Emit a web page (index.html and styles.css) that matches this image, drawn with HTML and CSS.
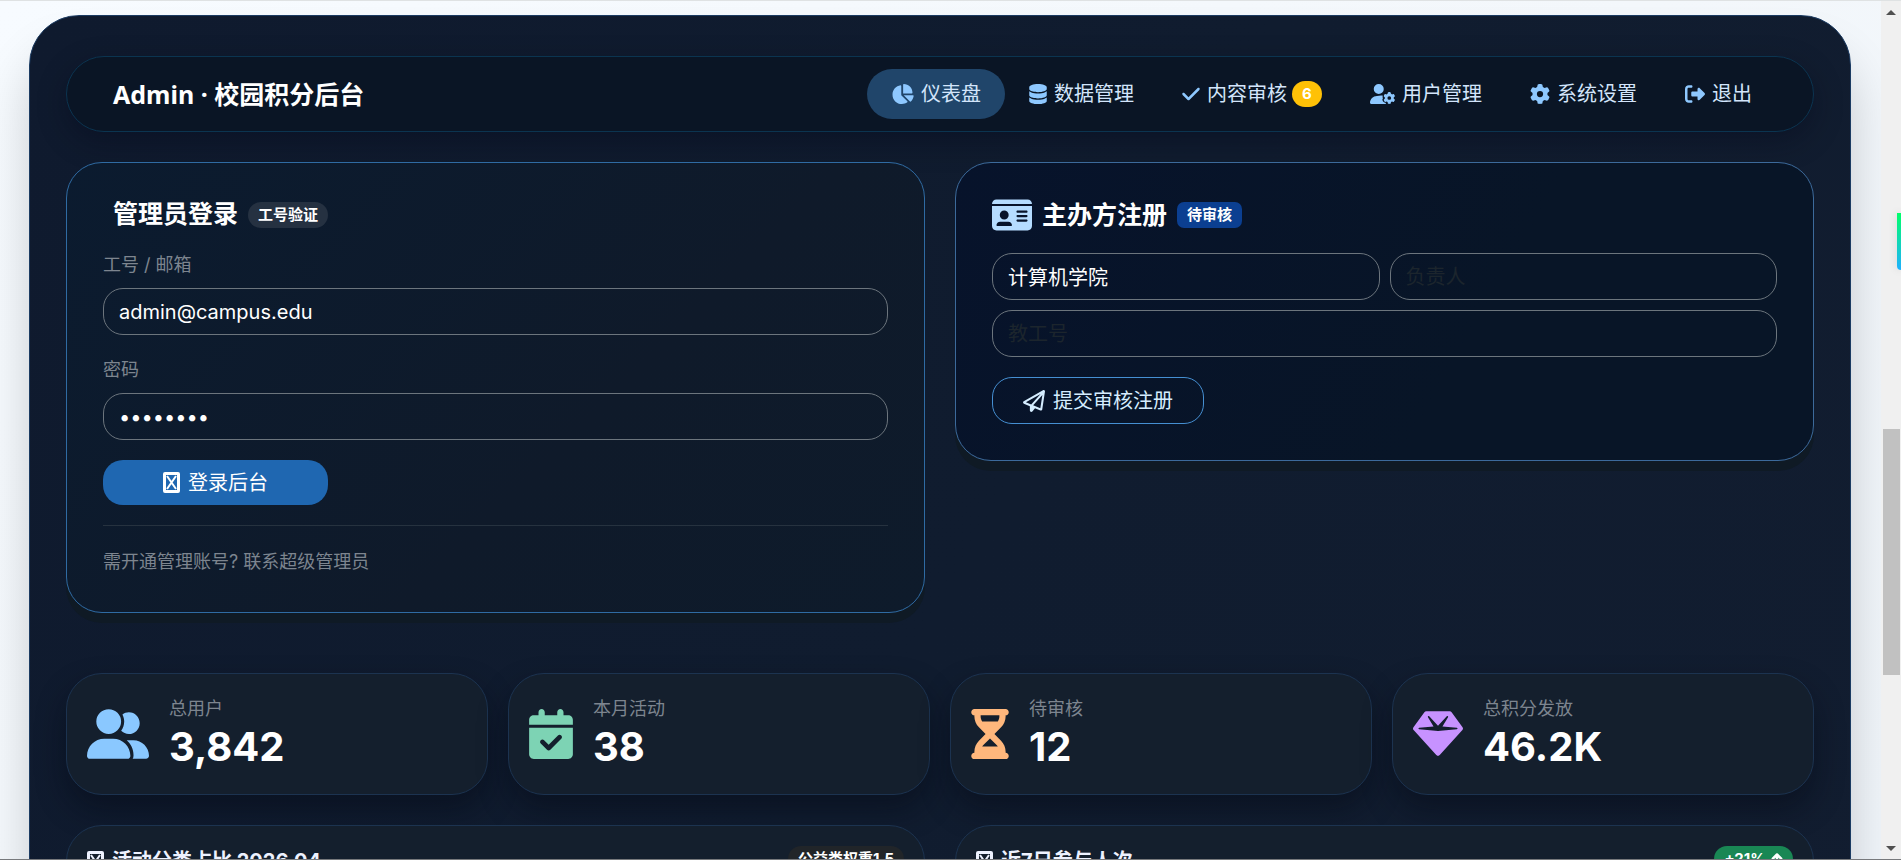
FILE: index.html
```html
<!DOCTYPE html>
<html lang="zh-CN">
<head>
<meta charset="utf-8">
<title>Admin · 校园积分后台</title>
<link rel="stylesheet" href="styles.css">
</head>
<body>
<svg class="sprite" aria-hidden="true">
  <symbol id="pie" viewBox="0 0 576 512"><path d="M304 240V16.6c0-9 7-16.6 16-16.6C443.7 0 544 100.3 544 224c0 9-7.6 16-16.6 16H304zM32 272C32 150.7 122.1 50.3 239 34.3c9.2-1.3 17 6.1 17 15.4V288L412.5 444.5c6.7 6.7 6.2 17.7-1.5 23.1C371.8 495.6 323.8 512 272 512C139.5 512 32 404.6 32 272zm526.4 16c9.3 0 16.6 7.8 15.4 17c-7.7 55.9-34.6 105.6-73.9 142.3c-6 5.6-15.4 5.2-21.2-.7L320 288H558.4z"/></symbol>
  <symbol id="database" viewBox="0 0 448 512"><path d="M448 80v48c0 44.2-100.3 80-224 80S0 172.2 0 128V80C0 35.8 100.3 0 224 0S448 35.8 448 80zM393.2 214.7c20.8-7.4 39.9-16.9 54.8-28.6V288c0 44.2-100.3 80-224 80S0 332.2 0 288V186.1c14.9 11.8 34 21.2 54.8 28.6C99.7 230.7 159.5 240 224 240s124.3-9.3 169.2-25.3zM0 346.1c14.9 11.8 34 21.2 54.8 28.6C99.7 390.7 159.5 400 224 400s124.3-9.3 169.2-25.3c20.8-7.4 39.9-16.9 54.8-28.6V432c0 44.2-100.3 80-224 80S0 476.2 0 432V346.1z"/></symbol>
  <symbol id="check" viewBox="0 0 448 512"><path d="M438.6 105.4c12.5 12.5 12.5 32.8 0 45.3l-256 256c-12.5 12.5-32.8 12.5-45.3 0l-128-128c-12.5-12.5-12.5-32.8 0-45.3s32.8-12.5 45.3 0L160 338.7 393.4 105.4c12.5-12.5 32.8-12.5 45.3 0z"/></symbol>
  <symbol id="gear" viewBox="0 0 512 512"><path d="M495.9 166.6c3.2 8.7 .5 18.4-6.4 24.6l-43.3 39.4c1.1 8.3 1.7 16.8 1.7 25.4s-.6 17.1-1.7 25.4l43.3 39.4c6.9 6.2 9.6 15.9 6.4 24.6c-4.4 11.9-9.7 23.3-15.8 34.3l-4.7 8.1c-6.6 11-14 21.4-22.1 31.2c-5.9 7.2-15.7 9.6-24.5 6.8l-55.7-17.7c-13.4 10.3-28.2 18.9-44 25.4l-12.5 57.1c-2 9.1-9 16.3-18.2 17.8c-13.8 2.3-28 3.5-42.5 3.5s-28.7-1.2-42.5-3.5c-9.2-1.5-16.2-8.7-18.2-17.8l-12.5-57.1c-15.8-6.5-30.6-15.1-44-25.4L83.1 425.9c-8.8 2.8-18.6 .3-24.5-6.8c-8.1-9.8-15.5-20.2-22.1-31.2l-4.7-8.1c-6.1-11-11.4-22.4-15.8-34.3c-3.2-8.7-.5-18.4 6.4-24.6l43.3-39.4C64.6 273.1 64 264.6 64 256s.6-17.1 1.7-25.4L22.4 191.2c-6.9-6.2-9.6-15.9-6.4-24.6c4.4-11.9 9.7-23.3 15.8-34.3l4.7-8.1c6.6-11 14-21.4 22.1-31.2c5.9-7.2 15.7-9.6 24.5-6.8l55.7 17.7c13.4-10.3 28.2-18.9 44-25.4l12.5-57.1c2-9.1 9-16.3 18.2-17.8C227.3 1.2 241.5 0 256 0s28.7 1.2 42.5 3.5c9.2 1.5 16.2 8.7 18.2 17.8l12.5 57.1c15.8 6.5 30.6 15.1 44 25.4l55.7-17.7c8.8-2.8 18.6-.3 24.5 6.8c8.1 9.8 15.5 20.2 22.1 31.2l4.7 8.1c6.1 11 11.4 22.4 15.8 34.3zM256 336a80 80 0 1 0 0-160 80 80 0 1 0 0 160z"/></symbol>
  <symbol id="user-gear" viewBox="0 0 640 512"><path d="M224 256A128 128 0 1 0 224 0a128 128 0 1 0 0 256zM178 304C80 304 0 384 0 482c0 17 13 30 30 30H414c-8-9-14-19-14-31l-2-4c-22 4-44-2-56-20c-10-14-20-30-24-48c-4-16 2-32 14-42l2-3c-10-12-16-26-12-42c2-7 5-14 8-20c-16-4-33-6-50-6z"/><svg x="342" y="206" width="304" height="304" viewBox="0 0 512 512"><use href="#gear"/></svg></symbol>
  <symbol id="exit" viewBox="0 0 512 512"><path d="M377.9 105.9L500.7 228.7c7.2 7.2 11.3 17.1 11.3 27.3s-4.1 20.1-11.3 27.3L377.9 406.1c-6.4 6.4-15 9.9-24 9.9c-18.7 0-33.9-15.2-33.9-33.9l0-62.1-128 0c-17.7 0-32-14.3-32-32l0-64c0-17.7 14.3-32 32-32l128 0 0-62.1c0-18.7 15.2-33.9 33.9-33.9c9 0 17.6 3.6 24 9.9zM160 96L96 96c-17.7 0-32 14.3-32 32l0 256c0 17.7 14.3 32 32 32l64 0c17.7 0 32 14.3 32 32s-14.3 32-32 32l-64 0c-53 0-96-43-96-96L0 128C0 75 43 32 96 32l64 0c17.7 0 32 14.3 32 32s-14.3 32-32 32z"/></symbol>
  <symbol id="id-card" viewBox="0 0 576 512"><path fill-rule="evenodd" d="M0 96l576 0c0-35.3-28.7-64-64-64H64C28.7 32 0 60.7 0 96zm0 32V416c0 35.3 28.7 64 64 64H512c35.3 0 64-28.7 64-64V128H0zM64 405.3c0-29.5 23.9-53.3 53.3-53.3H234.7c29.5 0 53.3 23.9 53.3 53.3c0 5.9-4.8 10.7-10.7 10.7H74.7c-5.9 0-10.7-4.8-10.7-10.7zM176 192a64 64 0 1 1 0 128 64 64 0 1 1 0-128zm176 16c0-8.8 7.2-16 16-16H496c8.8 0 16 7.2 16 16s-7.2 16-16 16H368c-8.8 0-16-7.2-16-16zm0 64c0-8.8 7.2-16 16-16H496c8.8 0 16 7.2 16 16s-7.2 16-16 16H368c-8.8 0-16-7.2-16-16zm0 64c0-8.8 7.2-16 16-16H496c8.8 0 16 7.2 16 16s-7.2 16-16 16H368c-8.8 0-16-7.2-16-16z"/></symbol>
  <symbol id="plane" viewBox="0 0 512 512"><path d="M16.1 260.2c-22.6 12.9-20.5 47.3 3.6 57.3L160 376V479.3c0 18.1 14.6 32.7 32.7 32.7c9.7 0 18.9-4.3 25.1-11.8l62-74.3 123.9 51.6c18.9 7.9 40.8-4.5 43.9-24.7l64-416c1.9-12.1-3.4-24.3-13.5-31.2s-23.3-7.5-34-1.4l-448 256zm52.1 25.5L409.7 90.6 190.1 336l1.2 1L68.2 285.7zM403.3 425.4L236.7 355.9 450.8 116.6 403.3 425.4z"/></symbol>
  <symbol id="users" viewBox="0 0 640 512"><path d="M96 128a128 128 0 1 1 256 0A128 128 0 1 1 96 128zM0 482.3C0 383.8 79.8 304 178.3 304h91.4C368.2 304 448 383.8 448 482.3c0 16.4-13.3 29.7-29.7 29.7H29.7C13.3 512 0 498.7 0 482.3zM609.3 512H471.4c5.4-9.4 8.6-20.3 8.6-32v-8c0-60.7-27.1-115.2-69.8-151.8c2.4-.1 4.7-.2 7.1-.2h61.4C567.8 320 640 392.2 640 481.3c0 17-13.8 30.7-30.7 30.7zM432 256c-31 0-59-12.6-79.3-32.9C372.4 196.5 384 163.6 384 128c0-26.8-6.6-52.1-18.3-74.3C384.3 40.1 407.2 32 432 32c61.9 0 112 50.1 112 112s-50.1 112-112 112z"/></symbol>
  <symbol id="calendar" viewBox="0 0 448 512"><path d="M128 0c17.7 0 32 14.3 32 32V64H288V32c0-17.7 14.3-32 32-32s32 14.3 32 32V64h48c26.5 0 48 21.5 48 48v48H0V112C0 85.5 21.5 64 48 64H96V32c0-17.7 14.3-32 32-32zM0 192H448V464c0 26.5-21.5 48-48 48H48c-26.5 0-48-21.5-48-48V192zM329 305c9.4-9.4 9.4-24.6 0-33.9s-24.6-9.4-33.9 0l-95 95-47-47c-9.4-9.4-24.6-9.4-33.9 0s-9.4 24.6 0 33.9l64 64c9.4 9.4 24.6 9.4 33.9 0L329 305z"/></symbol>
  <symbol id="hourglass" viewBox="0 0 384 512"><path fill-rule="evenodd" d="M32 0C14.3 0 0 14.3 0 32S14.3 64 32 64V75c0 42.4 16.9 83.1 46.9 113.1L146.7 256 78.9 323.9C48.9 353.9 32 394.6 32 437v11c-17.7 0-32 14.3-32 32s14.3 32 32 32H352c17.7 0 32-14.3 32-32s-14.3-32-32-32V437c0-42.4-16.9-83.1-46.9-113.1L237.3 256l67.9-67.9c30-30 46.9-70.7 46.9-113.1V64c17.7 0 32-14.3 32-32s-14.3-32-32-32H32zM96 75V64H288V75c0 19-5.6 37.4-16 53H112c-10.3-15.6-16-34-16-53zm16 309c3.5-5.3 7.6-10.3 12.1-14.9L192 301.3l67.9 67.9c4.6 4.6 8.6 9.6 12.1 14.9H112z"/></symbol>
  <symbol id="gem" viewBox="0 0 512 512"><path d="M116.7 33.8c4.5-6.1 11.7-9.8 19.3-9.8H376c7.6 0 14.8 3.6 19.3 9.8l112 152c6.8 9.2 6.1 21.9-1.5 30.4l-232 256c-4.5 5-11 7.9-17.8 7.9s-13.2-2.9-17.8-7.9l-232-256c-7.7-8.5-8.3-21.2-1.5-30.4l112-152zm38.5 39.8c-3.3 2.5-4.2 7-2.1 10.5l57.4 95.6L63.3 192c-4.1 .3-7.3 3.8-7.3 8s3.2 7.6 7.3 8l192 16c.4 0 .9 0 1.3 0l192-16c4.1-.3 7.3-3.8 7.3-8s-3.2-7.6-7.3-8L301.5 179.8l57.4-95.6c2.1-3.5 1.2-8.1-2.1-10.5s-7.9-2-10.7 1L256 172.2 165.9 74.6c-2.8-3-7.4-3.4-10.7-1z"/></symbol>
  <symbol id="missing" viewBox="0 0 17 21"><path d="M2 2H15V19H2ZM4 4L13 17M13 4L4 17" fill="none" stroke="currentColor" stroke-width="2"/><rect x="1" y="1" width="15" height="19" rx="1" fill="none" stroke="currentColor" stroke-width="2"/></symbol>
  <symbol id="arrow-up" viewBox="0 0 14 18"><path d="M7 16V3M2 8L7 3L12 8" fill="none" stroke="currentColor" stroke-width="3" stroke-linecap="round" stroke-linejoin="round"/></symbol>
</svg>

<div class="viewport">
  <main class="shell">
    <header class="topbar">
      <span class="brand">Admin · 校园积分后台</span>
      <nav class="menu">
        <a class="menu-item active" href="#dashboard"><svg class="w23"><use href="#pie"/></svg>仪表盘</a>
        <a class="menu-item" href="#data"><svg class="w18"><use href="#database"/></svg>数据管理</a>
        <a class="menu-item" href="#review"><svg class="w18"><use href="#check"/></svg>内容审核<span class="count">6</span></a>
        <a class="menu-item" href="#users-admin"><svg class="w25"><use href="#user-gear"/></svg>用户管理</a>
        <a class="menu-item" href="#settings"><svg class="w20"><use href="#gear"/></svg>系统设置</a>
        <a class="menu-item" href="#logout"><svg class="w20"><use href="#exit"/></svg>退出</a>
      </nav>
    </header>

    <div class="columns forms">
      <form class="panel login">
        <h2 class="panel-title inset">管理员登录 <span class="tag gray">工号验证</span></h2>
        <label class="label" for="account">工号 / 邮箱</label>
        <input class="field" id="account" type="text" value="admin@campus.edu">
        <label class="label" for="password">密码</label>
        <input class="field" id="password" type="password" value="password">
        <button class="btn primary" type="button"><svg class="w17"><use href="#missing"/></svg>登录后台</button>
        <p class="help">需开通管理账号? 联系超级管理员</p>
      </form>
      <form class="panel register">
        <h2 class="panel-title"><svg class="card-icon"><use href="#id-card"/></svg>主办方注册 <span class="tag blue">待审核</span></h2>
        <div class="field-grid">
          <input class="field" type="text" aria-label="学院" value="计算机学院">
          <input class="field" type="text" aria-label="负责人" placeholder="负责人">
          <input class="field wide" type="text" aria-label="教工号" placeholder="教工号">
        </div>
        <button class="btn outline" type="button"><svg class="w22"><use href="#plane"/></svg>提交审核注册</button>
      </form>
    </div>

    <section class="stats">
      <div class="stat"><svg class="stat-icon w62 sky"><use href="#users"/></svg><div><div class="stat-label">总用户</div><div class="stat-value">3,842</div></div></div>
      <div class="stat"><svg class="stat-icon w44 mint"><use href="#calendar"/></svg><div><div class="stat-label">本月活动</div><div class="stat-value">38</div></div></div>
      <div class="stat"><svg class="stat-icon w38 peach"><use href="#hourglass"/></svg><div><div class="stat-label">待审核</div><div class="stat-value">12</div></div></div>
      <div class="stat"><svg class="stat-icon w50 violet"><use href="#gem"/></svg><div><div class="stat-label">总积分发放</div><div class="stat-value">46.2K</div></div></div>
    </section>

    <div class="columns">
      <section class="chart"><h3 class="chart-title"><svg class="w17"><use href="#missing"/></svg>活动分类占比 2026.04</h3><span class="tag dark">公益类权重1.5</span></section>
      <section class="chart"><h3 class="chart-title"><svg class="w17"><use href="#missing"/></svg>近7日参与人次</h3><span class="tag green">+21% <svg class="arrow"><use href="#arrow-up"/></svg></span></section>
    </div>
  </main>
</div>
<div class="scrollbar">
  <svg class="scroll-arrow" viewBox="0 0 10 5"><path d="M0 5L5 0L10 5Z"/></svg>
  <div class="track"><div class="thumb"></div></div>
  <svg class="scroll-arrow" viewBox="0 0 10 5"><path d="M0 0L5 5L10 0Z"/></svg>
</div>
<div class="side-widget"></div>
</body>
</html>
```

FILE: styles.css
```css
* { box-sizing: border-box; }

body {
  margin: 0;
  height: 100vh;
  overflow: hidden;
  display: grid;
  grid-template-columns: minmax(0, 1fr) 20px;
  border-top: 1px solid #dfe2e3;
  border-bottom: 1px solid #77797c;
  background: #f0f0f0;
  color: #fff;
  font-family: Inter, "Noto Sans CJK SC", sans-serif;
  font-size: 20px;
  line-height: 30px;
}

.sprite { position: absolute; width: 0; height: 0; }
svg { fill: currentColor; flex: none; }
.w17 { width: 17px; height: 21px; }
.w18 { width: 18px; height: 20px; }
.w20 { width: 20px; height: 20px; }
.w22 { width: 22px; height: 22px; }
.w23 { width: 23px; height: 20px; }
.w25 { width: 25px; height: 20px; }
.w38 { width: 38px; }
.w44 { width: 44px; }
.w50 { width: 50px; }
.w62 { width: 62px; }

.viewport {
  overflow: hidden;
  padding: 14px 30px 0 29px;
  background: linear-gradient(135deg, #f7fbff 0%, #f3f7fb 60%, #f0f5fa 100%);
}

.shell {
  padding: 40px 36px;
  min-height: 1200px;
  border: 1px solid #1b3b62;
  border-radius: 50px;
  background: linear-gradient(120deg, #0f1a2e 0%, #101c2f 50%, #121d30 100%);
  box-shadow: 0 40px 50px rgba(0, 0, 0, .18);
}

.topbar {
  display: flex;
  align-items: center;
  justify-content: space-between;
  padding: 12px 37px 12px 46px;
  margin-bottom: 30px;
  border: 1px solid #0b3450;
  border-radius: 38px;
  background: #0a1525;
  box-shadow: 0 10px 30px rgba(0, 0, 20, .3);
}

.brand { font-size: 25px; font-weight: 700; font-family: "Noto Sans", "Noto Sans CJK SC", sans-serif; }

.menu { display: flex; }
.menu-item {
  display: flex;
  align-items: center;
  gap: 7px;
  height: 50px;
  padding: 0 24px;
  border-radius: 25px;
  color: #d3e5fb;
  text-decoration: none;
}
.menu-item svg { color: #8ec8ff; }
.menu-item.active { background: #20456a; }

.count {
  min-width: 30px;
  padding: 0 10px;
  margin-left: -2px;
  border-radius: 13px;
  background: #ffc107;
  color: #fff;
  font-size: 15px;
  font-weight: 700;
  line-height: 26px;
}

.columns {
  display: grid;
  grid-template-columns: 1fr 1fr;
  gap: 30px;
  align-items: start;
}
.forms { margin-bottom: 60px; }

.panel {
  display: flex;
  flex-direction: column;
  align-items: flex-start;
  padding: 34px 36px 36px;
  border: 1px solid #2f6ba3;
  border-radius: 36px;
  box-shadow: 0 10px 0 #0f1a25;
}
.login { padding-bottom: 35px; background: linear-gradient(135deg, #0b1b2f 0%, #0f1a2a 60%, #0e1b2b 100%); }
.register { border-color: #3c6a9b; background: linear-gradient(120deg, #07132b 0%, #081527 60%, #081527 100%); }

.panel-title {
  display: flex;
  align-items: center;
  gap: 10px;
  margin: 0 0 20px;
  font-size: 25px;
  line-height: 35px;
  font-weight: 700;
}
.inset { padding-left: 10px; }
.card-icon { width: 40px; height: 36px; color: #b5dcff; }

.tag {
  padding: 0 10px;
  border-radius: 13px;
  font-size: 15px;
  line-height: 26px;
  font-weight: 700;
}
.gray { background: #253141; }
.blue { border-radius: 7px; background: #0b3f91; }
.dark { background: #212529; }
.green { background: #198754; }

.label, .help, .stat-label { font-size: 18px; color: #7d858f; }
.label { line-height: 26px; margin-bottom: 10px; }

.field {
  width: 100%;
  height: 47px;
  padding: 0 15px;
  border: 1px solid #6c757d;
  border-radius: 20px;
  background: transparent;
  color: #fff;
  font: inherit;
}
.field::placeholder { color: #1c252d; opacity: 1; }
.login .field { margin-bottom: 20px; }
.login .field + .label { margin-top: 2px; }

.field-grid { display: grid; grid-template-columns: 1fr 1fr; gap: 10px; width: 100%; }
.wide { grid-column: 1 / -1; }

.btn {
  display: flex;
  align-items: center;
  justify-content: center;
  gap: 8px;
  border-radius: 20px;
  font: inherit;
}
.primary { width: 225px; height: 45px; border: 0; background: #1f67b1; color: #fff; }
.outline { height: 47px; margin-top: 20px; padding: 0 30px; border: 1px solid #458fd2; background: transparent; color: #d5edff; }

.help { width: 100%; margin: 20px 0 0; padding-top: 21px; border-top: 1px solid #26323f; }

.stats { display: grid; grid-template-columns: repeat(4, 1fr); gap: 20px; margin-bottom: 30px; }
.stat {
  display: flex;
  align-items: center;
  gap: 20px;
  height: 122px;
  padding: 0 20px;
  border: 1px solid #1c3350;
  border-radius: 36px;
  background: #141f2d;
  box-shadow: 0 15px 30px rgba(5, 8, 20, .45);
}
.stat-icon { height: 50px; }
.stat-label { line-height: 26px; }
.stat-value { font-size: 40px; line-height: 50px; font-weight: 700; }
.sky { color: #8ac8ff; }
.mint { color: #7dd3b4; }
.peach { color: #ffb77c; }
.violet { color: #c792ff; }

.chart {
  display: flex;
  align-items: flex-start;
  justify-content: space-between;
  min-height: 300px;
  padding: 20px;
  border: 1px solid #1c3350;
  border-radius: 36px;
  background: #141f2d;
}
.chart-title { display: flex; align-items: center; gap: 8px; margin: 0; font-size: 20px; line-height: 30px; font-weight: 700; color: #eef2ff; }
.arrow { width: 12px; height: 15px; margin-left: 2px; vertical-align: middle; }

.scrollbar {
  display: flex;
  flex-direction: column;
  align-items: center;
  padding: 9px 0 8px;
  background: #f0f0f0;
}
.scroll-arrow { width: 10px; height: 5px; color: #505050; }
.track { flex: 1; width: 17px; display: flex; flex-direction: column; }
.track::before { content: ""; flex: 414; }
.thumb { flex: 246; background: #c1c1c1; }
.track::after { content: ""; flex: 171; }

.side-widget {
  position: fixed;
  top: 213px;
  right: 0;
  width: 4px;
  height: 57px;
  border-radius: 0 0 0 4px;
  background: linear-gradient(#00ff6a, #1fb0ff);
  box-shadow: 0 0 8px rgba(0, 0, 0, .15);
}
```
